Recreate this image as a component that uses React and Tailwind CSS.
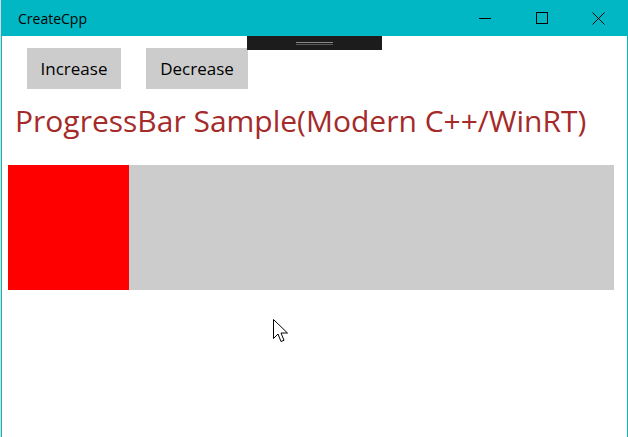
import React, { useState } from 'react';

const TitleBar = () => (
  <div className="flex h-[36px] items-center bg-[#00b7c3] text-black">
    <span className="ml-[16px] text-[14px]" style={{ fontFamily: '"Open Sans", sans-serif' }}>CreateCpp</span>
    <div className="ml-auto flex h-full">
      <div className="flex w-[57px] items-center justify-center">
        <div className="h-px w-[12px] bg-black" />
      </div>
      <div className="flex w-[57px] items-center justify-center">
        <div className="h-[12px] w-[12px] border border-black" />
      </div>
      <div className="flex w-[57px] items-center justify-center">
        <svg width="13" height="13" viewBox="0 0 13 13">
          <path d="M0.5 0.5 L12.5 12.5 M12.5 0.5 L0.5 12.5" stroke="black" strokeWidth="1" />
        </svg>
      </div>
    </div>
  </div>
);

const App = () => {
  const [value, setValue] = useState(20);

  return (
    <div className="flex h-[437px] w-[628px] bg-white" style={{ fontFamily: '"Open Sans", "Noto Sans", sans-serif' }}>
      <div className="w-px bg-[#d8d8d8]" />
      <div className="relative flex w-[627px] flex-col border-r border-l border-[#00b7c3]">
        <TitleBar />

        {/* drag handle strip */}
        <div className="absolute top-[36px] left-[245px] flex h-[14px] w-[135px] items-start justify-center bg-[#1c1c1c] pt-[6px]">
          <div className="flex w-[37px] flex-col gap-px">
            <div className="h-px bg-[#8a8a8a]" />
            <div className="h-px bg-[#5a5a5a]" />
          </div>
        </div>

        <div className="flex gap-[25px] pt-[12px] pl-[25px]">
          <button className="h-[41px] w-[94px] bg-[#cccccc] text-[17px] text-black" onClick={() => setValue(Math.min(100, value + 10))}>
            Increase
          </button>
          <button className="h-[41px] w-[102px] bg-[#cccccc] text-[17px] text-black" onClick={() => setValue(Math.max(0, value - 10))}>
            Decrease
          </button>
        </div>

        <h1 className="mt-[8px] ml-[13px] text-[30px] leading-[48px] font-normal text-[#a52a2a]">
          ProgressBar Sample(Modern C++/WinRT)
        </h1>

        <div className="mt-[20px] ml-[6px] flex h-[125px] w-[606px] bg-[#cccccc]">
          <div className="h-full bg-[#ff0000]" style={{ width: `${value}%` }} />
        </div>

        {/* mouse cursor */}
        <svg className="absolute top-[318px] left-[270px]" width="17" height="27" viewBox="0 0 17 27">
          <path d="M1.5 1.5 L1.5 20.5 L6 16 L9 23.5 L12 22.3 L9 15 L15.5 15 Z" fill="white" stroke="black" strokeWidth="1" strokeLinejoin="round" />
        </svg>
      </div>
    </div>
  );
};

export default App;
